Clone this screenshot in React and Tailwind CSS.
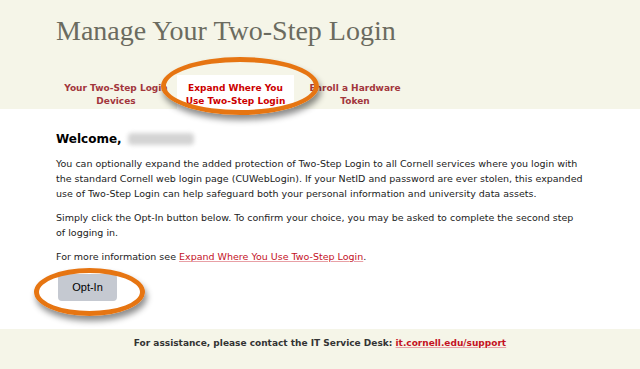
export default function App() {
  const body = { fontFamily: '"DejaVu Sans", Verdana, sans-serif' };
  return (
    <div className="w-[640px] h-[369px] bg-white flex flex-col overflow-hidden relative" style={body}>
      {/* Header */}
      <div className="bg-[#f5f5e8] h-[109px] pl-[56px] flex flex-col">
        <h1
          className="text-[28px] text-[#6b6b5f] mt-[15px] leading-[32px]"
          style={{ fontFamily: '"Liberation Serif", Georgia, serif' }}
        >
          Manage Your Two-Step Login
        </h1>
        <div className="flex gap-[1px] mt-auto text-[9px] font-bold leading-[13px] text-[#a2363c]">
          <div className="w-[120px] text-center pt-[7px]">Your Two-Step Login<br />Devices</div>
          <div className="w-[117px] bg-white text-center text-[#cc0000] pt-[7px] h-[34px]">
            Expand Where You<br />Use Two-Step Login
          </div>
          <div className="w-[120px] text-center pt-[7px]">Enroll a Hardware<br />Token</div>
        </div>
      </div>

      {/* Content */}
      <div className="flex-1 px-[56px] pt-[22px] text-[9.5px] text-[#222] leading-[15px]">
        <div className="flex items-center gap-[6px]">
          <span className="text-[12px] font-bold text-black leading-[16px]">Welcome,</span>
          <span className="inline-block w-[66px] h-[12px] bg-[#d4d4d4] blur-[2px] rounded-sm"></span>
        </div>
        <p className="mt-[9px]">
          You can optionally expand the added protection of Two-Step Login to all Cornell services where you login with
          the standard Cornell web login page (CUWebLogin). If your NetID and password are ever stolen, this expanded
          use of Two-Step Login can help safeguard both your personal information and university data assets.
        </p>
        <p className="mt-[9px]">
          Simply click the Opt-In button below. To confirm your choice, you may be asked to complete the second step of
          logging in.
        </p>
        <p className="mt-[9px]">
          For more information see{" "}
          <span className="text-[#c4121f] underline decoration-[#e8a0a6]">Expand Where You Use Two-Step Login</span>.
        </p>
        <button
          className="mt-[10px] ml-[2px] w-[59px] h-[27px] rounded-[4px] bg-[#c5c9d1] text-[11px] text-black"
          style={{ fontFamily: '"Liberation Sans", Arial, sans-serif' }}
        >
          Opt-In
        </button>
      </div>

      {/* Footer */}
      <div className="bg-[#f5f5e8] h-[40px] text-center text-[9px] font-bold text-[#333] pt-[8px]">
        For assistance, please contact the IT Service Desk:{" "}
        <span className="text-[#c4121f] underline decoration-[#e8a0a6]">it.cornell.edu/support</span>
      </div>

      {/* Highlight ellipses */}
      <div className="absolute left-[161px] top-[57px] w-[158px] h-[58px] rounded-[50%] border-[5px] border-[#e67512] shadow-[2px_5px_6px_rgba(0,0,0,0.45)]"></div>
      <div className="absolute left-[34px] top-[268px] w-[111px] h-[48px] rounded-[50%] border-[5px] border-[#e67512] shadow-[2px_5px_6px_rgba(0,0,0,0.45)]"></div>
    </div>
  );
}
